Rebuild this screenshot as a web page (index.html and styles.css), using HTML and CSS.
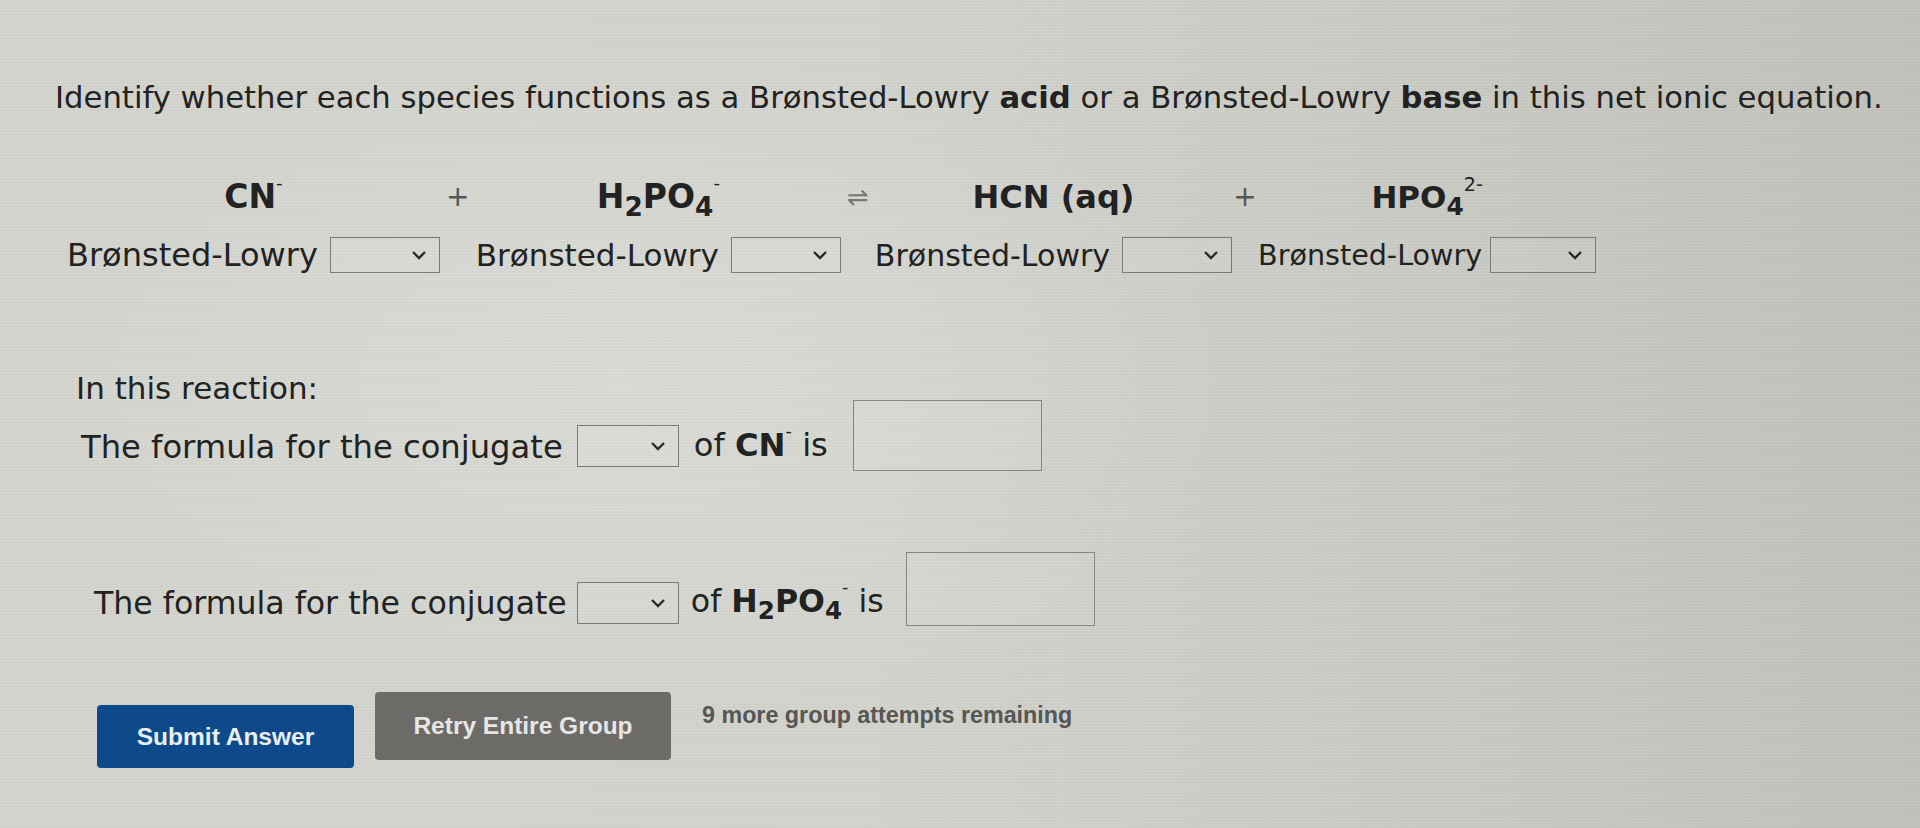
FILE: index.html
```html
<!DOCTYPE html>
<html lang="en">
<head>
<meta charset="utf-8">
<title>Brønsted-Lowry acids and bases</title>
<link rel="stylesheet" href="styles.css">
</head>
<body>
<main class="page">
  <p class="prompt">Identify whether each species functions as a Brønsted-Lowry <b>acid</b> or a Brønsted-Lowry <b>base</b> in this net ionic equation.</p>

  <div class="equation">
    <div class="species s1">CN<sup class="chg">-</sup></div>
    <div class="op">+</div>
    <div class="species s2">H<sub>2</sub>PO<sub>4</sub><sup class="chg">-</sup></div>
    <div class="op eq">&#8652;</div>
    <div class="species s3">HCN (aq)</div>
    <div class="op">+</div>
    <div class="species s4">HPO<sub>4</sub><sup class="chg2">2-</sup></div>

    <div class="role g1"><span>Brønsted-Lowry</span><span class="select"><svg viewBox="0 0 16 10" width="16" height="10"><path d="M2 2 L8 8 L14 2" fill="none" stroke="#2a2a2a" stroke-width="2.4"/></svg></span></div>
    <div></div>
    <div class="role g2"><span>Brønsted-Lowry</span><span class="select"><svg viewBox="0 0 16 10" width="16" height="10"><path d="M2 2 L8 8 L14 2" fill="none" stroke="#2a2a2a" stroke-width="2.4"/></svg></span></div>
    <div></div>
    <div class="role g3"><span>Brønsted-Lowry</span><span class="select"><svg viewBox="0 0 16 10" width="16" height="10"><path d="M2 2 L8 8 L14 2" fill="none" stroke="#2a2a2a" stroke-width="2.4"/></svg></span></div>
    <div></div>
    <div class="role g4"><span>Brønsted-Lowry</span><span class="select"><svg viewBox="0 0 16 10" width="16" height="10"><path d="M2 2 L8 8 L14 2" fill="none" stroke="#2a2a2a" stroke-width="2.4"/></svg></span></div>
  </div>

  <p class="reaction">In this reaction:</p>

  <div class="conj conj1">
    <span class="lead">The formula for the conjugate</span>
    <span class="select sm"><svg viewBox="0 0 16 10" width="16" height="10"><path d="M2 2 L8 8 L14 2" fill="none" stroke="#2a2a2a" stroke-width="2.4"/></svg></span>
    <span class="tail">of <b>CN<sup class="chg">-</sup></b> is</span>
    <span class="answer"></span>
  </div>

  <div class="conj conj2">
    <span class="lead">The formula for the conjugate</span>
    <span class="select sm"><svg viewBox="0 0 16 10" width="16" height="10"><path d="M2 2 L8 8 L14 2" fill="none" stroke="#2a2a2a" stroke-width="2.4"/></svg></span>
    <span class="tail">of <b>H<sub>2</sub>PO<sub>4</sub><sup class="chg">-</sup></b> is</span>
    <span class="answer tall"></span>
  </div>

  <div class="actions">
    <button class="btn submit">Submit Answer</button>
    <button class="btn retry">Retry Entire Group</button>
    <span class="attempts">9 more group attempts remaining</span>
  </div>
</main>
</body>
</html>
```

FILE: styles.css
```css
html, body {
  margin: 0;
  height: 100%;
}
body {
  width: 1920px;
  height: 828px;
  overflow: hidden;
  font-family: "DejaVu Sans", Verdana, sans-serif;
  color: #222;
  background:
    repeating-linear-gradient(180deg, rgba(255,255,255,0.05) 0px, rgba(255,255,255,0.05) 1px, rgba(0,0,0,0.03) 2px, rgba(0,0,0,0) 3px),
    radial-gradient(ellipse 900px 500px at 620px 380px, rgba(255,255,255,0.16), rgba(255,255,255,0) 70%),
    linear-gradient(90deg, #d4d4cf 0%, #d3d3ce 45%, #cacac5 75%, #c1c1bc 100%);
}
.page {
  padding: 78px 0 0 55px;
}
.prompt {
  margin: 0;
  font-size: 30.7px;
  line-height: 40px;
  white-space: nowrap;
}
.prompt b { font-weight: bold; }

.equation {
  margin: 59px 0 0 12px;
  display: grid;
  grid-template-columns: auto 36px auto 34px auto 26px auto;
  grid-template-rows: 50px 56px;
  align-items: center;
  justify-items: center;
  width: max-content;
}
.species {
  font-weight: bold;
  line-height: 40px;
  align-self: start;
}
.s1 { font-size: 33px; }
.s2 { font-size: 33px; }
.s3 { font-size: 32px; }
.s4 { font-size: 31px; }
.species sub {
  font-size: 0.8em;
  vertical-align: -0.3em;
  line-height: 0;
}
.chg {
  font-size: 0.55em;
  vertical-align: 1.05em;
  line-height: 0;
  font-weight: normal;
}
.chg2 {
  font-size: 0.62em;
  vertical-align: 0.9em;
  line-height: 0;
  font-weight: normal;
}
.op {
  font-size: 28px;
  color: #555;
  align-self: start;
  line-height: 40px;
}
.op.eq {
  font-size: 26px;
  color: #777;
}
.role {
  display: flex;
  align-items: center;
  gap: 12px;
}
.g1 { font-size: 32px; }
.g2 { font-size: 31px; }
.g3 { font-size: 30px; }
.g4 { font-size: 28.6px; gap: 8px; }
.select {
  box-sizing: border-box;
  width: 110px;
  height: 36px;
  border: 1.5px solid #7a7a78;
  display: inline-flex;
  align-items: center;
  justify-content: flex-end;
  padding-right: 12px;
  background: rgba(255,255,255,0.06);
}
.g4 .select { width: 106px; }
.select.sm {
  width: 102px;
  height: 42px;
}

.reaction {
  margin: 85px 0 0 21px;
  font-size: 31px;
  line-height: 40px;
}

.conj {
  display: flex;
  align-items: center;
  font-size: 32.2px;
  white-space: nowrap;
}
.conj b { font-weight: bold; }
.conj sub {
  font-size: 0.78em;
  vertical-align: -0.3em;
  line-height: 0;
}
.conj .chg { vertical-align: 1.1em; }
.conj .lead, .conj .tail { position: relative; }
.conj1 {
  margin: -9px 0 0 26px;
  height: 72px;
}
.conj1 .select { margin: 0 15px 0 14px; position: relative; top: 11px; }
.conj1 .lead { top: 12px; }
.conj1 .tail { top: 10px; }
.conj2 {
  margin: 80px 0 0 39px;
  height: 75px;
  font-size: 31.6px;
}
.conj2 .select { margin: 0 12px 0 10px; position: relative; top: 14px; }
.conj2 .lead { top: 14px; }
.conj2 .tail { top: 12px; }
.answer {
  box-sizing: border-box;
  display: inline-block;
  width: 189px;
  height: 71px;
  border: 1.5px solid #858583;
  margin-left: 25px;
  background: rgba(255,255,255,0.05);
}
.answer.tall { height: 74px; margin-left: 22px; }

.actions {
  margin: 66px 0 0 42px;
  display: flex;
  align-items: flex-start;
}
.btn {
  border: none;
  border-radius: 4px;
  font-family: "Liberation Sans", Arial, sans-serif;
  font-weight: bold;
  font-size: 24.5px;
  color: #e9eef4;
  cursor: pointer;
}
.submit {
  width: 257px;
  height: 63px;
  margin-top: 13px;
  background: #0e4a8b;
}
.retry {
  width: 296px;
  height: 68px;
  margin-left: 21px;
  background: #6c6b67;
  color: #e6e6e4;
}
.attempts {
  margin: 10px 0 0 31px;
  font-family: "Liberation Sans", Arial, sans-serif;
  font-weight: bold;
  font-size: 23.3px;
  color: #565654;
}
```
